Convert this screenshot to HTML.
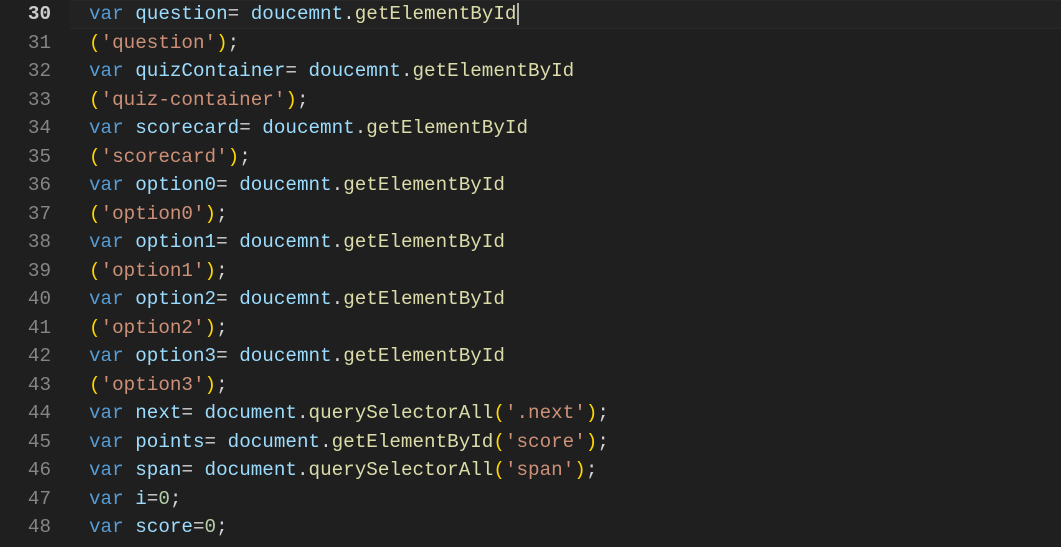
<!DOCTYPE html>
<html><head><style>
body{margin:0;background:#1f1f1f;width:1061px;height:547px;overflow:hidden;font-family:"Liberation Mono",monospace;font-size:19.25px;}
.l{position:absolute;left:0;width:1061px;height:28.5px;line-height:28.5px;white-space:pre;}
.n{position:absolute;right:1010px;color:#858585;}
.c{position:absolute;left:89px;color:#d4d4d4;}
.cur{background:#222;border-top:1px solid #282828;border-bottom:1px solid #282828;box-sizing:border-box;left:70px;width:991px;}
.k{color:#569cd6}.v{color:#9cdcfe}.f{color:#dcdcaa}.s{color:#ce9178}.p{color:#ffd700}.d{color:#b5cea8}
</style></head><body>
<div class="l cur" style="top:0"></div>
<div class="l" style="top:0"><span class="n" style="color:#cccccc;font-weight:bold">30</span><span class="c"><span class="k">var</span> <span class="v">question</span>= <span class="v">doucemnt</span>.<span class="f">getElementById</span><span style="border-left:2px solid #aeafad;margin-left:1px"></span></span></div>
<div class="l" style="top:28.5px"><span class="n">31</span><span class="c"><span class="p">(</span><span class="s">'question'</span><span class="p">)</span>;</span></div>
<div class="l" style="top:57px"><span class="n">32</span><span class="c"><span class="k">var</span> <span class="v">quizContainer</span>= <span class="v">doucemnt</span>.<span class="f">getElementById</span></span></div>
<div class="l" style="top:85.5px"><span class="n">33</span><span class="c"><span class="p">(</span><span class="s">'quiz-container'</span><span class="p">)</span>;</span></div>
<div class="l" style="top:114px"><span class="n">34</span><span class="c"><span class="k">var</span> <span class="v">scorecard</span>= <span class="v">doucemnt</span>.<span class="f">getElementById</span></span></div>
<div class="l" style="top:142.5px"><span class="n">35</span><span class="c"><span class="p">(</span><span class="s">'scorecard'</span><span class="p">)</span>;</span></div>
<div class="l" style="top:171px"><span class="n">36</span><span class="c"><span class="k">var</span> <span class="v">option0</span>= <span class="v">doucemnt</span>.<span class="f">getElementById</span></span></div>
<div class="l" style="top:199.5px"><span class="n">37</span><span class="c"><span class="p">(</span><span class="s">'option0'</span><span class="p">)</span>;</span></div>
<div class="l" style="top:228px"><span class="n">38</span><span class="c"><span class="k">var</span> <span class="v">option1</span>= <span class="v">doucemnt</span>.<span class="f">getElementById</span></span></div>
<div class="l" style="top:256.5px"><span class="n">39</span><span class="c"><span class="p">(</span><span class="s">'option1'</span><span class="p">)</span>;</span></div>
<div class="l" style="top:285px"><span class="n">40</span><span class="c"><span class="k">var</span> <span class="v">option2</span>= <span class="v">doucemnt</span>.<span class="f">getElementById</span></span></div>
<div class="l" style="top:313.5px"><span class="n">41</span><span class="c"><span class="p">(</span><span class="s">'option2'</span><span class="p">)</span>;</span></div>
<div class="l" style="top:342px"><span class="n">42</span><span class="c"><span class="k">var</span> <span class="v">option3</span>= <span class="v">doucemnt</span>.<span class="f">getElementById</span></span></div>
<div class="l" style="top:370.5px"><span class="n">43</span><span class="c"><span class="p">(</span><span class="s">'option3'</span><span class="p">)</span>;</span></div>
<div class="l" style="top:399px"><span class="n">44</span><span class="c"><span class="k">var</span> <span class="v">next</span>= <span class="v">document</span>.<span class="f">querySelectorAll</span><span class="p">(</span><span class="s">'.next'</span><span class="p">)</span>;</span></div>
<div class="l" style="top:427.5px"><span class="n">45</span><span class="c"><span class="k">var</span> <span class="v">points</span>= <span class="v">document</span>.<span class="f">getElementById</span><span class="p">(</span><span class="s">'score'</span><span class="p">)</span>;</span></div>
<div class="l" style="top:456px"><span class="n">46</span><span class="c"><span class="k">var</span> <span class="v">span</span>= <span class="v">document</span>.<span class="f">querySelectorAll</span><span class="p">(</span><span class="s">'span'</span><span class="p">)</span>;</span></div>
<div class="l" style="top:484.5px"><span class="n">47</span><span class="c"><span class="k">var</span> <span class="v">i</span>=<span class="d">0</span>;</span></div>
<div class="l" style="top:513px"><span class="n">48</span><span class="c"><span class="k">var</span> <span class="v">score</span>=<span class="d">0</span>;</span></div>
</body></html>
